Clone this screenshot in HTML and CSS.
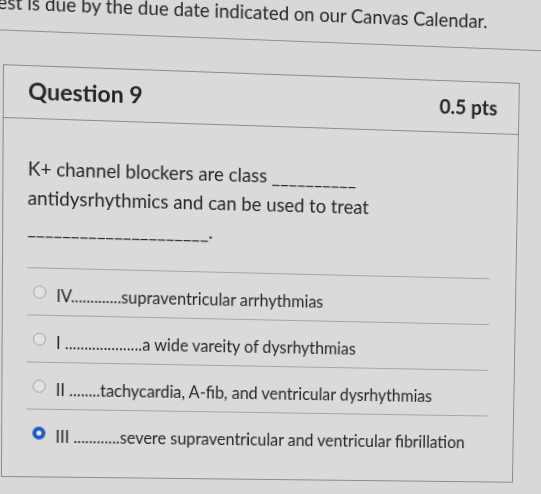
FILE: index.html
```html
<!DOCTYPE html>
<html lang="en">
<head>
  <meta charset="UTF-8">
  <title>Question 9</title>
  <link rel="stylesheet" href="styles.css">
</head>
<body>

  <div class="page">
    <p class="notice">est is due by the due date indicated on our Canvas Calendar.</p>
    <hr class="rule">

    <div class="question">
      <div class="question-header">
        <span class="question-name">Question 9</span>
        <span class="question-points">0.5 pts</span>
      </div>

      <div class="question-body">
        <p class="question-text">K+ channel blockers are class __________ antidysrhythmics and can be used to treat _____________________.</p>

        <div class="answers">
          <label class="answer">
            <span class="radio"></span>
            <span class="answer-text">IV.............supraventricular arrhythmias</span>
          </label>
          <label class="answer">
            <span class="radio"></span>
            <span class="answer-text">I ....................a wide vareity of dysrhythmias</span>
          </label>
          <label class="answer">
            <span class="radio"></span>
            <span class="answer-text">II ........tachycardia, A-fib, and ventricular dysrhythmias</span>
          </label>
          <label class="answer">
            <span class="radio checked"></span>
            <span class="answer-text">III ............severe supraventricular and ventricular fibrillation</span>
          </label>
        </div>
      </div>
    </div>
  </div>

</body>
</html>
```

FILE: styles.css
```css
html, body {
  margin: 0;
  padding: 0;
  height: 100%;
  overflow: hidden;
}

body {
  background-color: #d8d8d6;
  font-family: Lato, "Open Sans", sans-serif;
  color: #262626;
}

/* the photo is taken at a slight angle, so the whole page is tilted */
.page {
  width: 556px;
  height: 494px;
  transform-origin: 0 0;
  transform: matrix3d(1.020555, 0.041457, 0, 0.000061841, -0.0048618, 1.021009, 0, 0.000024942, 0, 0, 1, 0, 0.254835, -1.354912, 0, 1);
}

.notice {
  margin: -9px 0 0 -3px;
  font-size: 18.8px;
  line-height: 24px;
  white-space: nowrap;
}

.rule {
  margin: 15px 0 0;
  height: 0;
  border: 0;
  border-top: 1px solid #8f8f8d;
}

.question {
  margin: 33px 0 0 3px;
  width: 524px;
  height: 410px;
  box-sizing: border-box;
  border: 1px solid #8b8b89;
  background-color: #dadad8;
}

.question-header {
  display: flex;
  justify-content: space-between;
  align-items: baseline;
  height: 52px;
  box-sizing: border-box;
  padding: 10px 22px 0 24px;
  border-bottom: 1px solid #8b8b89;
  font-weight: bold;
}

.question-name {
  font-size: 23px;
  line-height: 28px;
}

.question-points {
  font-size: 20px;
  line-height: 28px;
}

.question-body {
  padding: 34px 24px 0;
}

.question-text {
  margin: 0 0 26px;
  font-size: 18.8px;
  line-height: 29px;
}

.answers {
  margin-right: 3px;
}

.answer {
  display: flex;
  align-items: center;
  height: 47px;
  box-sizing: border-box;
  border-top: 1px solid #a6a6a4;
  padding-left: 6px;
}

.radio {
  width: 13px;
  height: 13px;
  box-sizing: border-box;
  border: 1.5px solid #a2a2a0;
  border-radius: 50%;
  background-color: #e2e2e0;
  flex-shrink: 0;
}

.radio.checked {
  border: 4px solid #1c5bc8;
  background-color: #f4f4f4;
}

.answer-text {
  margin-left: 10px;
  padding-top: 7px;
  font-size: 16.4px;
  line-height: 20px;
}
```
